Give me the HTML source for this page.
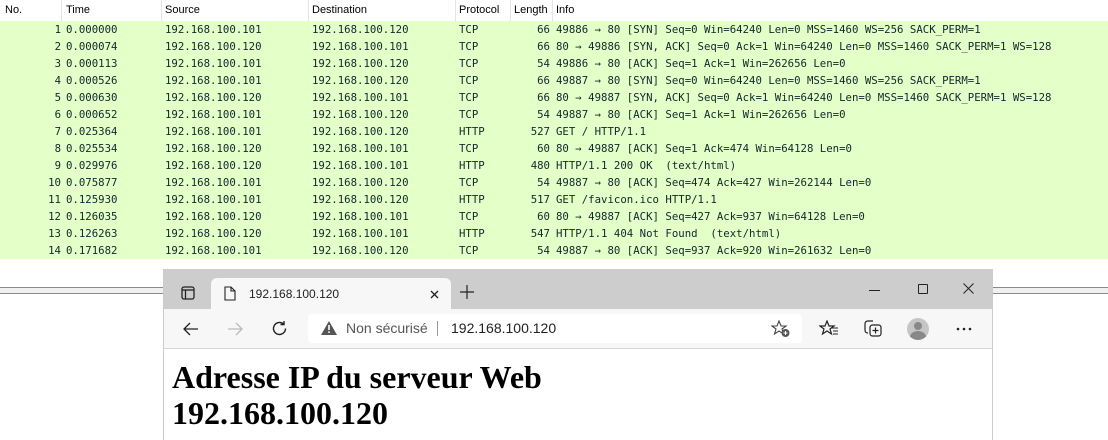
<!DOCTYPE html>
<html><head><meta charset="utf-8"><style>
*{margin:0;padding:0;box-sizing:border-box}
body{width:1108px;height:440px;background:#fff;position:relative;overflow:hidden;font-family:"Liberation Sans",sans-serif}
.hdr{position:absolute;left:0;top:0;width:1108px;height:21px;background:#fff;font-size:11px;color:#000}
.hdr span{position:absolute;top:4px}
.sep{position:absolute;top:0;width:1px;height:21px;background:#e5e5e5}
.row{position:absolute;left:0;width:1108px;height:17px;background:#e4ffc7;font-family:"DejaVu Sans Mono","Liberation Mono",monospace;font-size:10.7px;color:#12272e;line-height:17px;white-space:pre}
.row span{position:absolute;top:0}
.r{text-align:right}
.lines{position:absolute;height:7px;top:287px;border-top:1px solid #8a8a8a;border-bottom:1px solid #8a8a8a;background:#f0f0f0}
.win{position:absolute;left:163px;top:269px;width:830px;height:171px;background:#fff;border-left:1px solid #ccc;border-right:1px solid #ccc}
.tabbar{position:absolute;left:0;top:0;width:100%;height:40px;background:#cdcdcd}
.tab{position:absolute;left:47px;top:9px;width:240px;height:31px;background:#f7f7f7;border-radius:6px 6px 0 0;font-size:12px;color:#222}
.tool{position:absolute;left:0;top:40px;width:100%;height:40px;background:#f7f7f7;border-bottom:1px solid #d6d6d6}
.addr{position:absolute;left:144px;top:5px;width:494px;height:29px;background:#fff;border-radius:4px;font-size:14px}
h1{position:absolute;left:8px;top:90px;font-family:"Liberation Serif",serif;font-size:32px;line-height:36px;font-weight:bold;color:#000}
</style></head><body>
<div class="hdr">
<span style="left:5px">No.</span><span style="left:66px">Time</span><span style="left:165px">Source</span><span style="left:312px">Destination</span><span style="left:459px">Protocol</span><span style="left:514px">Length</span><span style="left:556px">Info</span>
<div class="sep" style="left:61px"></div><div class="sep" style="left:161px"></div><div class="sep" style="left:308px"></div><div class="sep" style="left:455px"></div><div class="sep" style="left:510px"></div><div class="sep" style="left:552px"></div>
</div>
<div id="rows"></div>
<div class="lines" style="left:0;width:164px"></div>
<div class="lines" style="left:993px;width:115px"></div>
<div class="win">
<div class="tabbar">
<svg style="position:absolute;left:17px;top:17px" width="14" height="14" viewBox="0 0 14 14"><rect x="1" y="1" width="12" height="12" rx="2" fill="none" stroke="#222" stroke-width="1.3"/><line x1="1" y1="4" x2="13" y2="4" stroke="#222" stroke-width="1.3"/><line x1="4.5" y1="4" x2="4.5" y2="13" stroke="#222" stroke-width="1.3"/></svg>
<div class="tab">
<svg style="position:absolute;left:13px;top:8px" width="12" height="15" viewBox="0 0 12 15"><path d="M1 1h6l4 4v9H1z M7 1v4h4" fill="none" stroke="#222" stroke-width="1.1"/></svg>
<span style="position:absolute;left:38px;top:9px">192.168.100.120</span>
<svg style="position:absolute;left:219px;top:12px" width="9" height="9" viewBox="0 0 9 9"><path d="M1 1L8 8M8 1L1 8" stroke="#222" stroke-width="1.3"/></svg>
</div>
<svg style="position:absolute;left:296px;top:16px" width="14" height="14" viewBox="0 0 14 14"><path d="M7 0V14M0 7H14" stroke="#222" stroke-width="1.2"/></svg>
<div style="position:absolute;left:705px;top:21px;width:11px;height:1px;background:#222"></div>
<div style="position:absolute;left:754px;top:15px;width:10px;height:10px;border:1px solid #222;border-radius:1px"></div>
<svg style="position:absolute;left:799px;top:14px" width="11" height="11" viewBox="0 0 11 11"><path d="M0.5 0.5L10.5 10.5M10.5 0.5L0.5 10.5" stroke="#222" stroke-width="1"/></svg>
</div>
<div class="tool">
<svg style="position:absolute;left:19px;top:13px" width="16" height="14" viewBox="0 0 16 14"><path d="M15 7H1M7 1L1 7L7 13" fill="none" stroke="#222" stroke-width="1.3"/></svg>
<svg style="position:absolute;left:63px;top:13px" width="16" height="14" viewBox="0 0 16 14"><path d="M1 7H15M9 1L15 7L9 13" fill="none" stroke="#bbb" stroke-width="1.3"/></svg>
<svg style="position:absolute;left:107px;top:11px" width="17" height="17" viewBox="0 0 17 17"><path d="M14.5 8.5A6 6 0 1 1 12.5 4M13 1V4.5H9.5" fill="none" stroke="#222" stroke-width="1.4"/></svg>
<div class="addr">
<svg style="position:absolute;left:13px;top:7px" width="16" height="14" viewBox="0 0 16 14"><path d="M8 0L16 14H0z" fill="#555"/><rect x="7.2" y="4" width="1.6" height="5" fill="#fff"/><rect x="7.2" y="10.3" width="1.6" height="1.6" fill="#fff"/></svg>
<span style="position:absolute;left:38px;top:6px;color:#555">Non sécurisé</span>
<div style="position:absolute;left:129px;top:7px;width:1px;height:15px;background:#999"></div>
<span style="position:absolute;left:143px;top:6px;color:#222">192.168.100.120</span>
<svg style="position:absolute;left:463px;top:6px" width="20" height="18" viewBox="0 0 20 18"><path d="M8 1L10 6H15L11 9L12.5 14L8 11L3.5 14L5 9L1 6H6z" fill="none" stroke="#444" stroke-width="1.1"/><circle cx="14.5" cy="13" r="4" fill="#555"/><path d="M14.5 11V15M12.5 13H16.5" stroke="#fff" stroke-width="1.1"/></svg>
</div>
<svg style="position:absolute;left:655px;top:11px" width="20" height="17" viewBox="0 0 20 17"><path d="M8 1L10 6H15L11 9L12.5 14L8 11L3.5 14L5 9L1 6H6z" fill="none" stroke="#222" stroke-width="1.2"/><path d="M13 8H19M14 11H19M14 14H19" stroke="#222" stroke-width="1.1"/></svg>
<svg style="position:absolute;left:700px;top:10px" width="19" height="19" viewBox="0 0 19 19"><path d="M4 14C2 14 1 13 1 11V5C1 3 2 2 4 2H9" fill="none" stroke="#222" stroke-width="1.2"/><rect x="6" y="6" width="11" height="11" rx="2.5" fill="#f7f7f7" stroke="#222" stroke-width="1.2"/><path d="M11.5 8.5V14.5M8.5 11.5H14.5" stroke="#222" stroke-width="1.2"/></svg>
<div style="position:absolute;left:743px;top:9px;width:22px;height:22px;border-radius:50%;background:#c5c5c5;overflow:hidden"><div style="position:absolute;left:7px;top:4px;width:8px;height:8px;border-radius:50%;background:#888"></div><div style="position:absolute;left:3px;top:13px;width:16px;height:12px;border-radius:50%;background:#888"></div></div>
<svg style="position:absolute;left:792px;top:18px" width="16" height="4" viewBox="0 0 16 4"><circle cx="2" cy="2" r="1.3" fill="#222"/><circle cx="8" cy="2" r="1.3" fill="#222"/><circle cx="14" cy="2" r="1.3" fill="#222"/></svg>
</div>
<h1>Adresse IP du serveur Web<br>192.168.100.120</h1>
</div>
<script>
const d=[
["1","0.000000","192.168.100.101","192.168.100.120","TCP","66","49886 → 80 [SYN] Seq=0 Win=64240 Len=0 MSS=1460 WS=256 SACK_PERM=1"],
["2","0.000074","192.168.100.120","192.168.100.101","TCP","66","80 → 49886 [SYN, ACK] Seq=0 Ack=1 Win=64240 Len=0 MSS=1460 SACK_PERM=1 WS=128"],
["3","0.000113","192.168.100.101","192.168.100.120","TCP","54","49886 → 80 [ACK] Seq=1 Ack=1 Win=262656 Len=0"],
["4","0.000526","192.168.100.101","192.168.100.120","TCP","66","49887 → 80 [SYN] Seq=0 Win=64240 Len=0 MSS=1460 WS=256 SACK_PERM=1"],
["5","0.000630","192.168.100.120","192.168.100.101","TCP","66","80 → 49887 [SYN, ACK] Seq=0 Ack=1 Win=64240 Len=0 MSS=1460 SACK_PERM=1 WS=128"],
["6","0.000652","192.168.100.101","192.168.100.120","TCP","54","49887 → 80 [ACK] Seq=1 Ack=1 Win=262656 Len=0"],
["7","0.025364","192.168.100.101","192.168.100.120","HTTP","527","GET / HTTP/1.1"],
["8","0.025534","192.168.100.120","192.168.100.101","TCP","60","80 → 49887 [ACK] Seq=1 Ack=474 Win=64128 Len=0"],
["9","0.029976","192.168.100.120","192.168.100.101","HTTP","480","HTTP/1.1 200 OK  (text/html)"],
["10","0.075877","192.168.100.101","192.168.100.120","TCP","54","49887 → 80 [ACK] Seq=474 Ack=427 Win=262144 Len=0"],
["11","0.125930","192.168.100.101","192.168.100.120","HTTP","517","GET /favicon.ico HTTP/1.1"],
["12","0.126035","192.168.100.120","192.168.100.101","TCP","60","80 → 49887 [ACK] Seq=427 Ack=937 Win=64128 Len=0"],
["13","0.126263","192.168.100.120","192.168.100.101","HTTP","547","HTTP/1.1 404 Not Found  (text/html)"],
["14","0.171682","192.168.100.101","192.168.100.120","TCP","54","49887 → 80 [ACK] Seq=937 Ack=920 Win=261632 Len=0"]];
let h="";d.forEach((r,i)=>{h+=`<div class="row" style="top:${21+i*17}px"><span class="r" style="right:1047px">${r[0]}</span><span style="left:66px">${r[1]}</span><span style="left:165px">${r[2]}</span><span style="left:312px">${r[3]}</span><span style="left:459px">${r[4]}</span><span class="r" style="right:558px">${r[5]}</span><span style="left:556px">${r[6]}</span></div>`});
document.getElementById("rows").innerHTML=h;
</script>
</body></html>
